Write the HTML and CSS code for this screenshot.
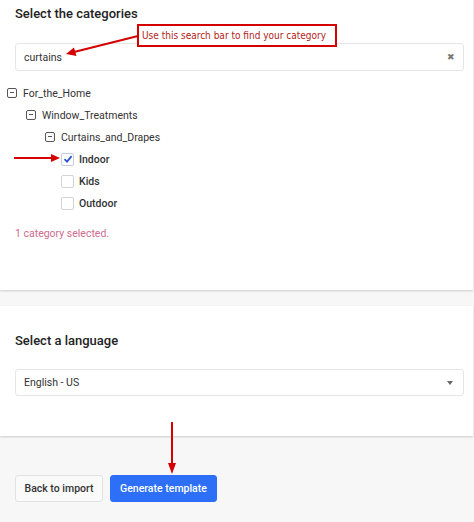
FILE: index.html
```html
<!DOCTYPE html>
<html>
<head>
  <meta charset="utf-8">
  <title>Template generator</title>
  <link rel="stylesheet" href="styles.css">
</head>
<body>

<!-- categories -->
<div class="card card-categories">
  <h2 class="title">Select the categories</h2>

  <div class="field search">
    <span class="field-text">curtains</span>
    <span class="clear">&#x2716;</span>
  </div>

  <ul class="tree">
    <li>
      <div class="node"><span class="toggle"></span>For_the_Home</div>
      <ul>
        <li>
          <div class="node"><span class="toggle"></span>Window_Treatments</div>
          <ul>
            <li>
              <div class="node"><span class="toggle"></span>Curtains_and_Drapes</div>
              <ul class="leaves">
                <li class="leaf"><span class="check checked"><svg width="10" height="10" viewBox="0 0 10 10"><path d="M1.5 5.2 L4 7.6 L8.6 2.2" fill="none" stroke="#2b55c9" stroke-width="1.8"/></svg></span>Indoor</li>
                <li class="leaf"><span class="check"></span>Kids</li>
                <li class="leaf"><span class="check"></span>Outdoor</li>
              </ul>
            </li>
          </ul>
        </li>
      </ul>
    </li>
  </ul>

  <p class="selected-count">1 category selected.</p>

  <!-- annotations -->
  <div class="note">Use this search bar to find your category</div>
  <svg class="arrow arrow-search" width="80" height="30" viewBox="0 0 80 30">
    <line x1="78" y1="4" x2="14" y2="20" stroke="#d40000" stroke-width="2"/>
    <path d="M6 22 L14 15.5 L16.5 24 Z" fill="#d40000"/>
  </svg>
  <svg class="arrow arrow-indoor" width="50" height="10" viewBox="0 0 50 10">
    <line x1="0" y1="5" x2="38" y2="5" stroke="#d40000" stroke-width="2"/>
    <path d="M46 5 L37 1 L37 9 Z" fill="#d40000"/>
  </svg>
</div>

<!-- language -->
<div class="card card-language">
  <h2 class="title">Select a language</h2>
  <div class="field select">
    <span class="field-text">English - US</span>
    <span class="caret"></span>
  </div>
</div>

<!-- actions -->
<div class="actions">
  <input type="button" class="btn btn-back" value="Back to import">
  <input type="button" class="btn btn-generate" value="Generate template">
  <svg class="arrow arrow-generate" width="10" height="54" viewBox="0 0 10 54">
    <line x1="5" y1="0" x2="5" y2="42" stroke="#d40000" stroke-width="2"/>
    <path d="M5 52 L1 41 L9 41 Z" fill="#d40000"/>
  </svg>
</div>

</body>
</html>
```

FILE: styles.css
```css
body {
  margin: 0;
  background: #f7f7f7;
  font-family: Roboto, sans-serif;
  font-size: 10.5px;
  color: #333;
}
.card {
  position: relative;
  background: white;
  width: 473px;
  box-sizing: border-box;
  padding: 4px 9px 0 15px;
  box-shadow: 0 1px 2px rgba(0,0,0,0.18);
}
.card-categories {
  height: 290px;
}
.card-language {
  height: 130px;
  margin-top: 16px;
  padding-top: 25px;
}
.title {
  margin: 0;
  font-size: 13px;
  line-height: 20px;
  font-weight: 500;
  color: #222;
}
.field {
  display: flex;
  align-items: center;
  justify-content: space-between;
  height: 27px;
  border: 1px solid #e6e6e6;
  border-radius: 3px;
  padding: 0 8px;
  box-sizing: border-box;
}
.search {
  margin-top: 19px;
  height: 28px;
}
.select {
  margin-top: 18px;
}
.clear {
  color: #777;
  font-size: 9px;
}
.caret {
  width: 0;
  height: 0;
  border-left: 3px solid transparent;
  border-right: 3px solid transparent;
  border-top: 4px solid #666;
  margin-right: 2px;
}
.tree, .tree ul {
  list-style: none;
  margin: 0;
  padding: 0;
}
.tree {
  margin: 11px 0 0 -8px;
}
.tree ul {
  padding-left: 19px;
}
.tree ul.leaves {
  padding-left: 16px;
}
.node, .leaf {
  display: flex;
  align-items: center;
  height: 22px;
}
.leaf {
  font-weight: 500;
}
.toggle {
  position: relative;
  width: 8px;
  height: 8px;
  border: 1px solid #555;
  border-radius: 2px;
  margin-right: 6px;
}
.toggle::after {
  content: "";
  position: absolute;
  left: 2px;
  right: 2px;
  top: 3px;
  height: 1px;
  background: #555;
}
.check {
  display: flex;
  align-items: center;
  justify-content: center;
  width: 11px;
  height: 11px;
  border: 1px solid #d4d4d4;
  border-radius: 2px;
  margin-right: 5px;
}
.check.checked {
  border-color: #c5cbe0;
}
.selected-count {
  margin: 12px 0 0;
  color: #d06b8e;
  line-height: 16px;
}
.note {
  position: absolute;
  left: 137px;
  top: 24px;
  width: 200px;
  height: 23px;
  box-sizing: border-box;
  border: 2px solid #d40000;
  background: white;
  color: #b22222;
  font-family: "DejaVu Sans Condensed", "Liberation Sans", sans-serif;
  font-size: 10px;
  line-height: 19px;
  padding-left: 3px;
}
.arrow {
  position: absolute;
}
.arrow-search {
  left: 60px;
  top: 32px;
}
.arrow-indoor {
  left: 14px;
  top: 153px;
}
.actions {
  position: relative;
  display: flex;
  gap: 7px;
  padding: 39px 15px 0;
}
.btn {
  height: 27px;
  border-radius: 3px;
  font-family: Roboto, sans-serif;
  font-size: 10.5px;
  font-weight: 500;
  padding: 0;
}
.btn-back {
  width: 88px;
  background: #fafafa;
  border: 1px solid #e2e2e2;
  color: #333;
}
.btn-generate {
  width: 107px;
  background: #2d6ff7;
  border: 1px solid #2d6ff7;
  color: white;
}
.arrow-generate {
  left: 167px;
  top: -14px;
}
```
